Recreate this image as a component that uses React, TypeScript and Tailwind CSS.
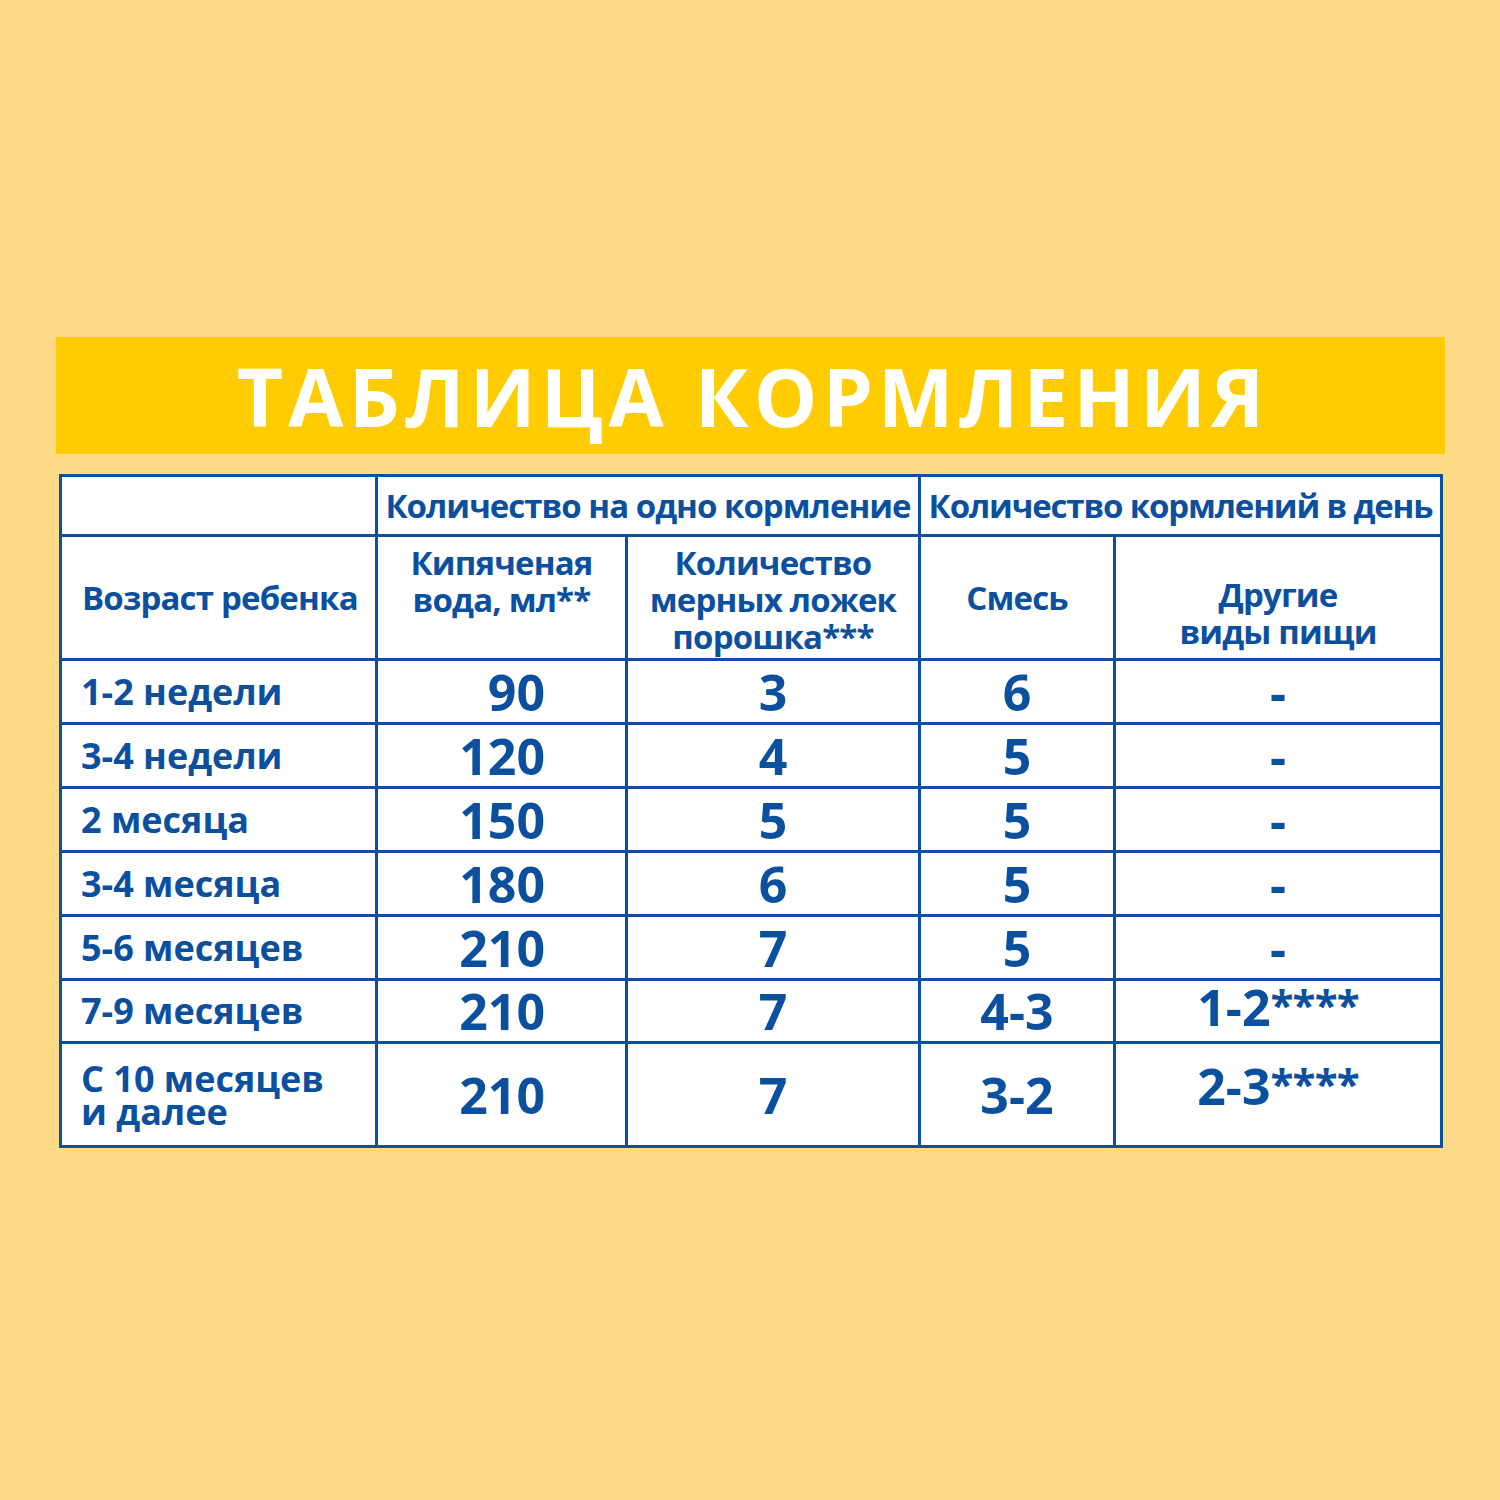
import React from 'react';

const rows = [
  { age: '1-2 недели', water: '90', spoons: '3', mix: '6', other: '-' },
  { age: '3-4 недели', water: '120', spoons: '4', mix: '5', other: '-' },
  { age: '2 месяца', water: '150', spoons: '5', mix: '5', other: '-' },
  { age: '3-4 месяца', water: '180', spoons: '6', mix: '5', other: '-' },
  { age: '5-6 месяцев', water: '210', spoons: '7', mix: '5', other: '-' },
];

const cell = 'border-[3px] border-[#0b4f9f] p-0';

const Stars = () => <span className="text-[42px] align-[6px] tracking-[-0.02em]">****</span>;

const App = () => {
  return (
    <div className="min-h-[1500px] w-[1500px] bg-[#fedb89] pt-[337px] font-['Open_Sans',_'Noto_Sans',_sans-serif] text-[#0b4f9f]">
      {/* Banner */}
      <div className="mx-[56px] w-[1389px] h-[117px] bg-[#ffcc00] flex items-center justify-center">
        <h1 className="text-[80px] font-bold text-white tracking-[0.065em] leading-none pl-[0.065em]">
          ТАБЛИЦА КОРМЛЕНИЯ
        </h1>
      </div>

      {/* Table */}
      <table className="ml-[59px] mt-[20px] w-[1381px] table-fixed border-collapse bg-white font-bold">
        <colgroup>
          <col className="w-[316px]" />
          <col className="w-[250px]" />
          <col className="w-[293px]" />
          <col className="w-[195px]" />
          <col className="w-[327px]" />
        </colgroup>
        <thead>
          <tr className="h-[60px]">
            <th className={cell}></th>
            <th colSpan={2} className={`${cell} text-[33px] tracking-[-0.03em] text-center align-middle`}>
              Количество на одно кормление
            </th>
            <th colSpan={2} className={`${cell} text-[33px] tracking-[-0.035em] text-center align-middle`}>
              Количество кормлений в день
            </th>
          </tr>
          <tr className="h-[124px] text-[33px] leading-[37px] tracking-[-0.025em]">
            <th className={`${cell} text-left pl-[20px] align-middle`}>Возраст ребенка</th>
            <th className={`${cell} text-center align-top pt-[7px]`}>
              Кипяченая
              <br />
              вода, мл**
            </th>
            <th className={`${cell} text-center align-top pt-[7px]`}>
              Количество
              <br />
              мерных ложек
              <br />
              порошка***
            </th>
            <th className={`${cell} text-center align-middle`}>Смесь</th>
            <th className={`${cell} text-center align-bottom pb-[8px]`}>
              Другие
              <br />
              виды пищи
            </th>
          </tr>
        </thead>
        <tbody>
          {rows.map((r, i) => (
            <tr key={i} className="h-[64px]">
              <td className={`${cell} pl-[19px] text-[36px] leading-none`}>{r.age}</td>
              <td className={`${cell} text-right pr-[80px] text-[50px] leading-none`}>{r.water}</td>
              <td className={`${cell} text-center text-[50px] leading-none`}>{r.spoons}</td>
              <td className={`${cell} text-center text-[50px] leading-none`}>{r.mix}</td>
              <td className={`${cell} text-center text-[50px] leading-none`}>{r.other}</td>
            </tr>
          ))}
          <tr className="h-[63px]">
            <td className={`${cell} pl-[19px] text-[36px] leading-none`}>7-9 месяцев</td>
            <td className={`${cell} text-right pr-[80px] text-[50px] leading-none`}>210</td>
            <td className={`${cell} text-center text-[50px] leading-none`}>7</td>
            <td className={`${cell} text-center text-[50px] leading-none`}>4-3</td>
            <td className={`${cell} text-center text-[50px] leading-none pb-[8px]`}>
              1-2
              <Stars />
            </td>
          </tr>
          <tr className="h-[104px]">
            <td className={`${cell} pl-[19px] text-[36px] leading-[33px]`}>
              С 10 месяцев
              <br />
              и далее
            </td>
            <td className={`${cell} text-right pr-[80px] text-[50px] leading-none`}>210</td>
            <td className={`${cell} text-center text-[50px] leading-none`}>7</td>
            <td className={`${cell} text-center text-[50px] leading-none`}>3-2</td>
            <td className={`${cell} text-center text-[50px] leading-none align-middle pb-[18px]`}>
              2-3
              <Stars />
            </td>
          </tr>
        </tbody>
      </table>
    </div>
  );
};

export default App;
